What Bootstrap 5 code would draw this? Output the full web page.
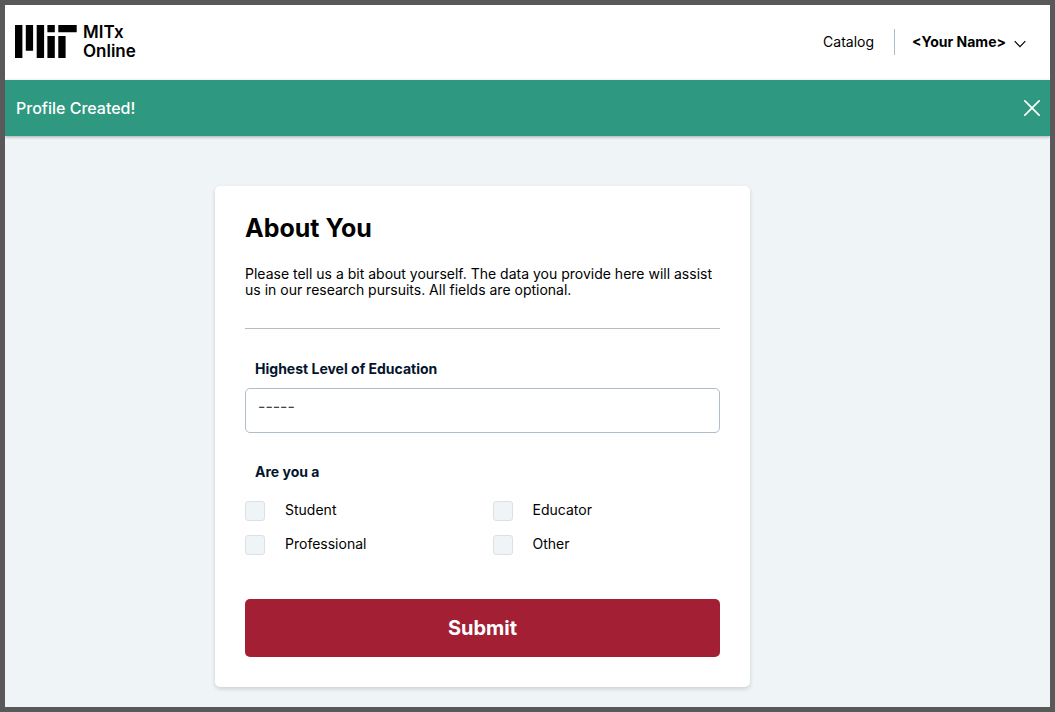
<!DOCTYPE html>
<html lang="en">
<head>
<meta charset="utf-8">
<meta name="viewport" content="width=device-width, initial-scale=1">
<title>About You | MITx Online</title>
<link rel="stylesheet" href="https://cdn.jsdelivr.net/npm/bootstrap@5.3.0/dist/css/bootstrap.min.css">
<style>
  body {
    font-family: Inter, "Liberation Sans", sans-serif;
    font-size: 14px;
    line-height: 16px;
    color: #000;
    background: #eff4f7;
    border: 5px solid #595959;
  }
  .site-header { min-height: 75px; padding: 0 24px 2px 10px; }
  .site-header a, .user-menu { color: #000; }
  .brand-text { font-size: 17px; line-height: 19px; font-weight: 600; margin-left: 6px; }
  .header-rule { width: 1px; height: 26px; margin: 0 17px 0 20px; background: #b0bdca; }
  .user-menu { font-weight: 700; }
  .notice {
    min-height: 56px;
    padding: 0 10px 0 11px;
    background: #2e9880;
    font-size: 16px;
    line-height: 24px;
    font-weight: 500;
    box-shadow: 0 1px 3px rgba(0, 0, 0, .3);
  }
  .page-body { padding: 50px 20px 20px 20.1%; }
  .profile-card {
    max-width: 535px;
    padding: 30px;
    border-radius: 5px;
    box-shadow: 0 2px 4px rgba(0, 0, 0, .15);
  }
  .profile-card h1 { font-size: 25px; line-height: 25px; font-weight: 700; margin: 0 0 25px; }
  .profile-card hr { border-top: 1px solid #bbb; opacity: 1; margin: 30px 0 32px; }
  .field-title { font-size: 14px; line-height: 16px; font-weight: 700; color: #03152d; padding-left: 10px; }
  .field-title[for] { margin-bottom: 11px; }
  legend.field-title { margin: 31px 0 21px; }
  .education {
    height: 45px;
    padding: 4px 12px 14px;
    font-size: 16px;
    line-height: 24px;
    color: #444;
    border: 1px solid #b0bdca;
    border-radius: 5px;
    background-image: none;
  }
  .roles { display: grid; grid-template-columns: 1fr 1fr; gap: 14px 20px; margin-bottom: 44px; }
  .roles label { line-height: 18px; padding-bottom: 2px; }
  .roles .form-check-input {
    width: 20px;
    height: 20px;
    border: 1px solid #dbe1e5;
    border-radius: 3px;
    background-color: #eff4f7;
  }
  .submit-btn {
    --bs-btn-bg: #a31f34;
    --bs-btn-color: #fff;
    --bs-btn-hover-bg: #8c1a2c;
    --bs-btn-hover-color: #fff;
    height: 58px;
    font-size: 20px;
    font-weight: 700;
    border: 0;
    border-radius: 5px;
  }
</style>
</head>
<body class="min-vh-100">
<header class="site-header d-flex align-items-center justify-content-between bg-white">
  <a href="#" class="d-flex align-items-center text-decoration-none">
    <svg width="62" height="33" viewBox="0 0 62 33" aria-hidden="true">
      <path d="M0 0h7.4v33H0zM10.8 0h7.3v25.7h-7.3zM21.7 0h7.4v33h-7.4zM32.4 0h7.4v7.3h-7.4zM32.4 11h7.4v22h-7.4zM43.3 0h18.4v7.3H43.3zM43.3 11h7.3v22h-7.3z"/>
    </svg>
    <span class="brand-text">MITx<br>Online</span>
  </a>
  <nav class="d-flex align-items-center">
    <a href="#" class="text-decoration-none">Catalog</a>
    <span class="header-rule"></span>
    <button type="button" class="user-menu border-0 bg-transparent p-0 d-flex align-items-center" aria-haspopup="true">
      <span>&lt;Your Name&gt;</span>
      <svg class="ms-2 mt-1" width="12" height="8" viewBox="0 0 12 8" fill="none" stroke="#000" stroke-width="1.2" aria-hidden="true"><path d="M.7 1.2 6 6.6l5.3-5.4"/></svg>
    </button>
  </nav>
</header>
<div class="notice d-flex align-items-center justify-content-between text-white" role="alert">
  <span>Profile Created!</span>
  <button type="button" class="border-0 bg-transparent p-0 d-flex" aria-label="Close">
    <svg width="16" height="16" viewBox="0 0 16 16" stroke="#fff" stroke-width="1.7" stroke-linecap="round" aria-hidden="true"><path d="M.9.9l14.2 14.2M15.1.9.9 15.1"/></svg>
  </button>
</div>
<main class="page-body">
  <form class="profile-card bg-white">
    <h1>About You</h1>
    <p class="mb-0">Please tell us a bit about yourself. The data you provide here will assist us in our research pursuits. All fields are optional.</p>
    <hr>
    <label class="field-title d-block" for="education">Highest Level of Education</label>
    <select class="form-select education" id="education"><option>-----</option></select>
    <fieldset>
      <legend class="field-title">Are you a</legend>
      <div class="roles">
        <div class="d-flex"><input class="form-check-input m-0" type="checkbox" id="student"><label class="ps-3 ms-1" for="student">Student</label></div>
        <div class="d-flex"><input class="form-check-input m-0" type="checkbox" id="educator"><label class="ps-3 ms-1" for="educator">Educator</label></div>
        <div class="d-flex"><input class="form-check-input m-0" type="checkbox" id="professional"><label class="ps-3 ms-1" for="professional">Professional</label></div>
        <div class="d-flex"><input class="form-check-input m-0" type="checkbox" id="other"><label class="ps-3 ms-1" for="other">Other</label></div>
      </div>
    </fieldset>
    <button type="submit" class="btn submit-btn w-100">Submit</button>
  </form>
</main>
<script src="https://cdn.jsdelivr.net/npm/bootstrap@5.3.0/dist/js/bootstrap.bundle.min.js"></script>
</body>
</html>
